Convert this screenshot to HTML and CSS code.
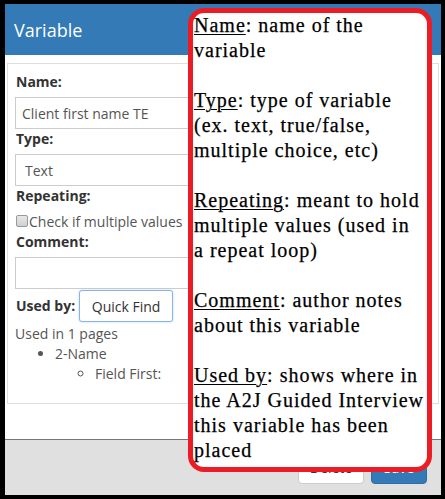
FILE: index.html
```html
<!DOCTYPE html>
<html>
<head>
<meta charset="utf-8">
<link rel="stylesheet" href="styles.css">
</head>
<body>
<div class="frame">
  <div class="header">Variable</div>
  <div class="main">
    <div class="panel">
      <div class="lbl">Name:</div>
      <input class="field" type="text" value="Client first name TE">
      <div class="lbl">Type:</div>
      <select class="field sel"><option>Text</option></select>
      <div class="lbl">Repeating:</div>
      <label class="check"><span class="box"></span>Check if multiple values</label>
      <div class="lbl">Comment:</div>
      <textarea class="field area"></textarea>
      <div class="usedby">
        <span class="lbl inline">Used by:</span>
        <button class="qf">Quick Find</button>
      </div>
      <div class="usedin">Used in 1 pages</div>
      <ul class="list">
        <li>2-Name
          <ul><li>Field First:</li></ul>
        </li>
      </ul>
    </div>
  </div>
  <div class="footer">
    <button class="btn del">Delete</button>
    <button class="btn save">Save</button>
  </div>
  <div class="note">
    <p><u>Name</u>: name of the<br>variable</p>
    <p><u>Type</u>: type of variable<br>(ex. text, true/false,<br>multiple choice, etc)</p>
    <p><u>Repeating</u>: meant to hold<br>multiple values (used in<br>a repeat loop)</p>
    <p><u>Comment</u>: author notes<br>about this variable</p>
    <p><u>Used by</u>: shows where in<br>the A2J Guided Interview<br>this variable has been<br>placed</p>
  </div>
</div>
</body>
</html>
```
FILE: styles.css
```css
html, body {
  margin: 0;
  padding: 0;
  background: #000;
}
.frame {
  position: relative;
  width: 445px;
  height: 499px;
  box-sizing: border-box;
  border-style: solid;
  border-color: #000;
  border-width: 4px 4px 4px 5px;
  background: #fff;
  display: flex;
  flex-direction: column;
  font-family: "Open Sans", "Liberation Sans", sans-serif;
  font-size: 14px;
  color: #333;
}
.header {
  height: 51px;
  flex: none;
  background: #337ab7;
  color: #fff;
  font-size: 18px;
  padding-left: 9px;
  display: flex;
  align-items: center;
}
.main {
  flex: 1;
  padding: 8px 2px 0 2px;
}
.panel {
  box-sizing: border-box;
  height: 341px;
  border: 1px solid #ddd;
  padding: 8px 7px 0 7px;
}
.lbl {
  font-weight: bold;
  line-height: 20px;
  height: 20px;
  margin-bottom: 5px;
  padding-left: 1px;
}
.field {
  display: block;
  box-sizing: border-box;
  width: 100%;
  height: 32px;
  margin: 0;
  border: 1px solid #ccc;
  border-radius: 0;
  background: #fff;
  font-family: "Open Sans", "Liberation Sans", sans-serif;
  font-size: 14px;
  color: #555;
  padding: 0 6px;
  outline: none;
}
.sel {
  -webkit-appearance: none;
  appearance: none;
  padding-left: 9px;
}
.area {
  resize: none;
}
.check {
  display: flex;
  align-items: center;
  height: 20px;
  margin-top: 1px;
  margin-bottom: 1px;
  color: #555;
}
.box {
  display: inline-block;
  box-sizing: border-box;
  width: 12px;
  height: 12px;
  margin: 0 1px 0 1px;
  border: 1px solid #999;
  border-radius: 2px;
  background: linear-gradient(#e8e8e8, #d0d0d0);
}
.usedby {
  display: flex;
  align-items: center;
  margin-top: 1px;
  height: 32px;
}
.lbl.inline {
  margin: 0 4px 0 0;
}
.qf {
  box-sizing: border-box;
  width: 94px;
  height: 32px;
  background: #fff;
  border: 1px solid #8ab4e8;
  border-radius: 3px;
  box-shadow: 0 0 2px rgba(102, 175, 233, 0.6);
  font-family: "Open Sans", "Liberation Sans", sans-serif;
  font-size: 14px;
  color: #333;
  padding: 0;
}
.usedin {
  margin-top: 2px;
  line-height: 20px;
  color: #555;
}
.list {
  margin: 0;
  padding-left: 40px;
  line-height: 20px;
  color: #555;
}
.list ul {
  margin: 0;
  padding-left: 40px;
  list-style-type: circle;
}
.footer {
  flex: none;
  height: 56px;
  box-sizing: border-box;
  border-top: 1px solid #777;
  background: #e0e0e0;
  display: flex;
  justify-content: flex-end;
  align-items: flex-start;
  gap: 7px;
  padding: 10px 14px 0 0;
}
.btn {
  height: 34px;
  border-radius: 4px;
  font-family: "Open Sans", "Liberation Sans", sans-serif;
  font-size: 14px;
  padding: 0;
}
.del {
  width: 66px;
  background: #fff;
  border: 1px solid #ccc;
  color: #333;
}
.save {
  width: 56px;
  background: #337ab7;
  border: 1px solid #2e6da4;
  color: #fff;
}
.note {
  position: absolute;
  left: 183px;
  top: 4px;
  width: 244px;
  height: 464px;
  box-sizing: border-box;
  border: 5px solid #ed1c24;
  border-radius: 16px;
  background: #fff;
  padding: 0 0 0 1px;
  font-family: "Liberation Serif", "Times New Roman", serif;
  font-size: 20px;
  letter-spacing: 1px;
  line-height: 25px;
  color: #000;
  white-space: nowrap;
  -webkit-text-stroke: 0.25px #000;
}
.note p {
  margin: 0 0 25px 0;
}
.note u {
  text-decoration-thickness: 1px;
  text-underline-offset: 2px;
}
```
